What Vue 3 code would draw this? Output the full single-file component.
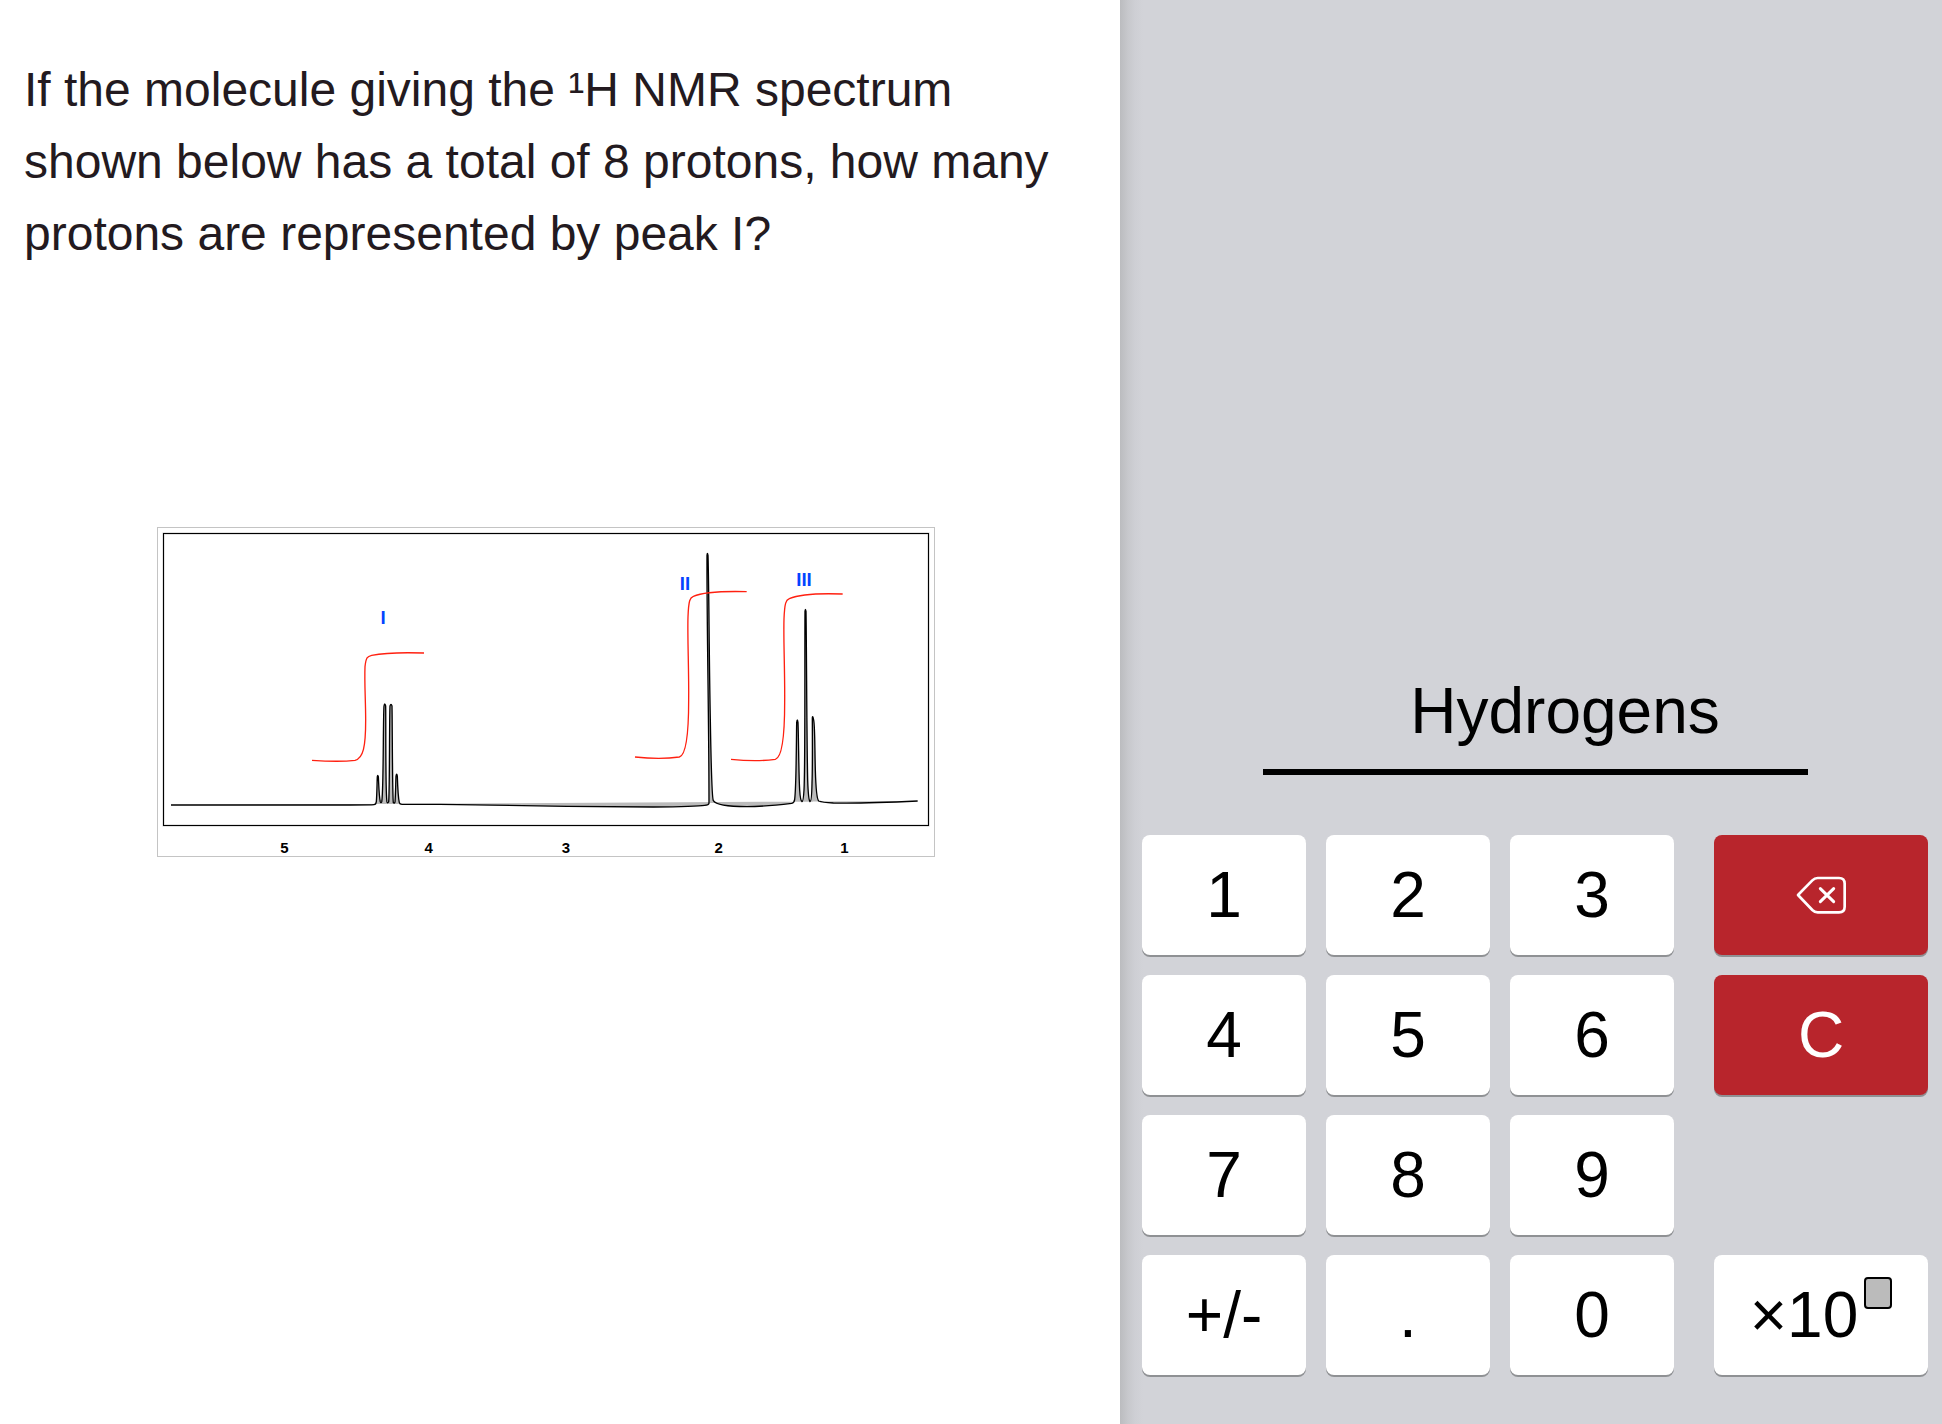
<script setup>
import { ref } from 'vue'

const answer = ref('')
const digits = ['1', '2', '3', '4', '5', '6', '7', '8', '9', '+/-', '.', '0']

const ticks = [
  { label: '5', x: 403 },
  { label: '4', x: 836 },
  { label: '3', x: 1248 },
  { label: '2', x: 1706 },
  { label: '1', x: 2083 },
]
const peaks = [
  { label: 'I', x: 699, y: 311 },
  { label: 'II', x: 1605, y: 211 },
  { label: 'III', x: 1962, y: 197 },
]

function press(key) {
  if (key === '+/-') {
    answer.value = answer.value.startsWith('-') ? answer.value.slice(1) : '-' + answer.value
  } else {
    answer.value += key
  }
}
function erase() {
  answer.value = answer.value.slice(0, -1)
}
function clear() {
  answer.value = ''
}
function exponent() {
  answer.value += 'e'
}
</script>

<template>
  <main class="page">
    <section class="question">
      <p class="prompt">
        If the molecule giving the ¹H NMR spectrum shown below has a total of 8 protons, how many protons are represented by peak I?
      </p>
      <svg class="spectrum" viewBox="21 21 2334 990" role="img" aria-label="Proton NMR spectrum with peaks I, II and III">
        <rect class="outer" x="22.5" y="22.5" width="2331" height="987" />
        <rect class="halo" x="40.5" y="40.5" width="2295" height="876" />
        <rect class="frame" x="40.5" y="40.5" width="2295" height="876" />
        <path
          class="trace"
          d="M63 855 H600 C640 855 665 855 672 854 Q678 854 679 845 C681 820 681 785 682 770 Q683 763 685 770
             C686 785 687 830 691 846 Q693 850 695 846 C701 820 699 600 702 558 Q704 545 707 558
             C708 600 706 820 711 846 Q713 851 716 846 C719 820 718 600 720 558 Q723 548 726 558
             C727 600 727 830 730 848 Q733 852 735 846 C737 820 737 790 738 768 Q740 757 742 768
             C743 800 745 835 748 848 Q749 853 756 853 L870 853 C1070 857 1300 860 1510 861
             Q1640 860 1664 856 Q1676 855 1677 850 C1677 600 1670 300 1671 106 Q1672 95 1674 106
             C1677 200 1677 400 1681 600 C1684 780 1686 835 1690 842 C1696 852 1730 860 1790 860
             C1840 860 1900 853 1925 850 Q1933 848 1934 838 C1939 800 1939 660 1940 608 Q1942 592 1944 608
             C1946 660 1946 760 1949 810 Q1951 842 1956 845 Q1960 845 1962 810 C1966 740 1964 400 1965 274
             Q1966 262 1968 274 C1970 400 1970 640 1973 780 Q1975 840 1980 845 Q1985 845 1986 790
             C1988 740 1987 640 1987 594 Q1988 584 1991 600 C1995 620 1994 680 1996 750
             C1998 820 2001 838 2006 843 Q2016 847 2050 849 C2130 851 2220 847 2303 843"
        />
        <path
          class="integral"
          d="M486 721 C560 726 590 724 615 721 C640 715 647 680 647 600 C647 540 643 490 645 440
             C648 412 652 409 665 406 C700 399 760 397 822 399"
        />
        <path
          class="integral"
          d="M1455 711 C1530 719 1560 715 1588 711 C1608 706 1616 650 1616 540 C1617 450 1612 350 1614 290
             C1616 240 1620 233 1630 229 C1660 216 1710 213 1790 215"
        />
        <path
          class="integral"
          d="M1743 718 C1818 726 1848 722 1876 718 C1896 713 1904 657 1904 547 C1905 457 1900 357 1902 297
             C1904 247 1908 240 1918 236 C1948 223 1998 219 2078 222"
        />
        <text v-for="p in peaks" :key="p.label" class="peak" :x="p.x" :y="p.y">{{ p.label }}</text>
        <text v-for="t in ticks" :key="t.label" class="tick" :x="t.x" y="998">{{ t.label }}</text>
      </svg>
    </section>

    <section class="entry">
      <div class="answer">
        <input id="answer" v-model="answer" class="value" type="text" inputmode="decimal" />
        <label class="unit" for="answer">Hydrogens</label>
      </div>
      <div class="keypad">
        <div class="digits">
          <button v-for="d in digits" :key="d" class="key" type="button" @click="press(d)">{{ d }}</button>
        </div>
        <div class="actions">
          <button class="key danger" type="button" aria-label="Delete" @click="erase">
            <svg class="backspace" viewBox="0 0 156 120" aria-hidden="true">
              <path class="outline" d="M9 60 L52 16 Q59 9 68 9 H132 Q149 9 149 26 V95 Q149 112 132 112 H68 Q59 112 52 105 Z" />
              <path class="cross" d="M76 41 L116 80 M116 41 L76 80" />
            </svg>
          </button>
          <button class="key danger" type="button" @click="clear">C</button>
          <button class="key power" type="button" @click="exponent">×10<span class="slot"></span></button>
        </div>
      </div>
    </section>
  </main>
</template>

<style>
body {
  margin: 0;
}
</style>

<style scoped>
.page {
  display: grid;
  grid-template-columns: 1120fr 822fr;
  min-height: 100vh;
  font-family: "Liberation Sans", Arial, Helvetica, sans-serif;
  background: #fff;
}

.question {
  box-sizing: border-box;
  display: flex;
  flex-direction: column;
  align-items: center;
  gap: 257px;
  padding: 54px 52px 48px 24px;
}
.prompt {
  width: 100%;
  margin: 0;
  font-size: 48px;
  line-height: 72px;
  color: #231a20;
}
.spectrum {
  display: block;
  width: 100%;
  max-width: 778px;
}
.spectrum rect {
  fill: none;
}
.outer {
  stroke: #c4c4c4;
  stroke-width: 3;
}
.halo {
  stroke: #c8c8c8;
  stroke-width: 6;
}
.frame {
  stroke: #000;
  stroke-width: 3;
}
.trace {
  fill: #bbb;
  stroke: #000;
  stroke-width: 4;
  stroke-linejoin: round;
}
.integral {
  fill: none;
  stroke: #ff2010;
  stroke-width: 4;
}
.peak,
.tick {
  font-weight: 700;
  text-anchor: middle;
}
.peak {
  font-size: 56px;
  fill: #0443ff;
}
.tick {
  font-size: 45px;
  fill: #000;
}

.entry {
  box-sizing: border-box;
  display: flex;
  flex-direction: column;
  justify-content: flex-end;
  gap: 60px;
  padding: 48px 14px 49px 22px;
  background: linear-gradient(to right, #bbbcbf, #c7c8cc 8px, #cecfd4 15px, #d2d3d8 23px);
}
.answer {
  display: flex;
  justify-content: center;
  align-self: center;
  width: 545px;
  max-width: 100%;
  padding-bottom: 21px;
  border-bottom: 6px solid #000;
  font-size: 64px;
  line-height: 74px;
  color: #000;
}
.value {
  width: 60px;
  height: 74px;
  padding: 0;
  border: 0;
  outline: 0;
  background: transparent;
  font: inherit;
  text-align: right;
}

.keypad {
  display: grid;
  grid-template-columns: 532fr 214fr;
  gap: 40px;
}
.digits,
.actions {
  display: grid;
  grid-template-rows: repeat(4, 120px);
  gap: 20px;
}
.digits {
  grid-template-columns: repeat(3, 1fr);
}
.key {
  display: flex;
  align-items: center;
  justify-content: center;
  padding: 0;
  border: 0;
  border-radius: 8px;
  background: #fff;
  box-shadow: 0 2px 0 #8f9194;
  font-family: inherit;
  font-size: 64px;
  color: #000;
  cursor: pointer;
}
.danger {
  background: #b8252c;
  color: #fff;
}
.backspace {
  width: 52px;
  height: 40px;
  fill: none;
  stroke: #fff;
  stroke-linecap: round;
  stroke-linejoin: round;
}
.outline {
  stroke-width: 8;
}
.cross {
  stroke-width: 9;
}
.power {
  grid-row: 4;
}
.slot {
  box-sizing: border-box;
  width: 28px;
  height: 32px;
  margin: 0 0 44px 6px;
  border: 2px solid #000;
  border-radius: 4px;
  background: #bbb;
}
</style>
